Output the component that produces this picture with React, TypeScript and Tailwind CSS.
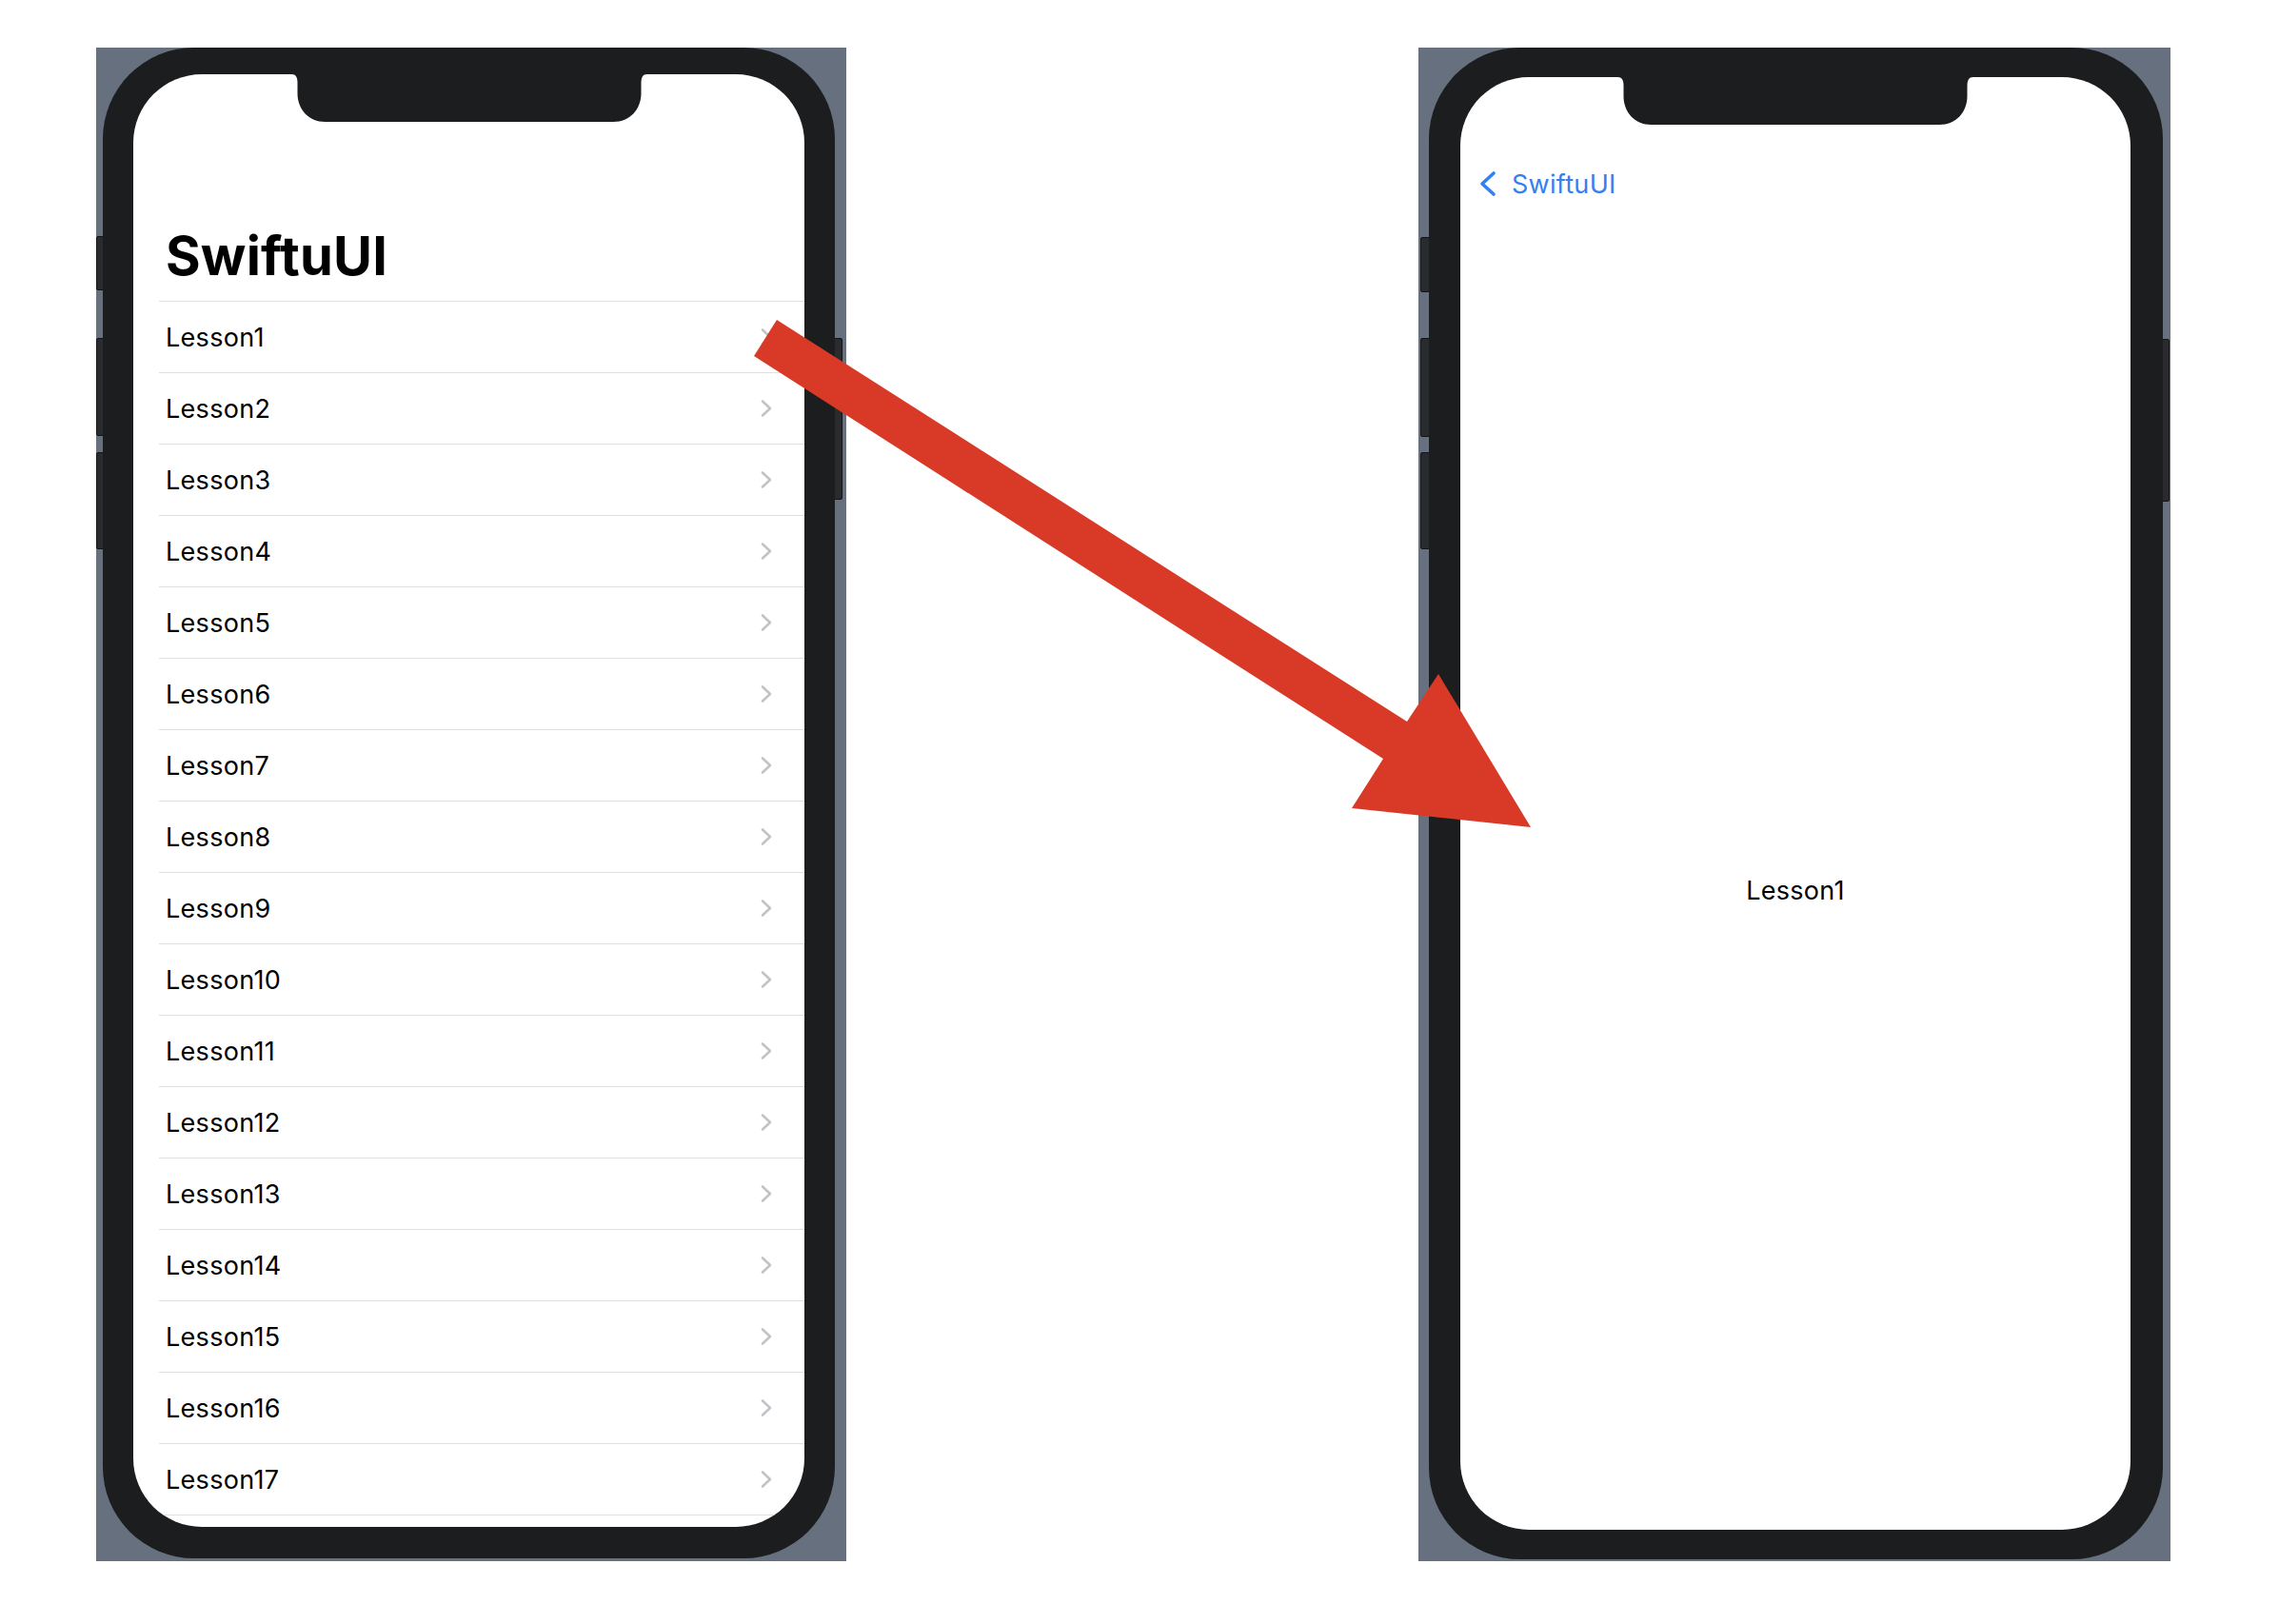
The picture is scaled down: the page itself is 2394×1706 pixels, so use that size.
import React from "react";

const LESSONS = Array.from({ length: 17 }, (_, i) => `Lesson${i + 1}`);

function Notch() {
  return (
    <svg
      className="absolute top-0 left-1/2 -translate-x-1/2"
      width="373"
      height="50"
      viewBox="0 0 373 50"
    >
      <path
        d="M0 0 H373 C369 0 367 3 367 9 V20 C367 37 355 50 338 50 H35 C18 50 6 37 6 20 V9 C6 3 4 0 0 0 Z"
        fill="#1c1d1f"
      />
    </svg>
  );
}

function RowChevron() {
  return (
    <svg width="14" height="20" viewBox="0 0 14 20" fill="none">
      <polyline
        points="3,2.5 11,10 3,17.5"
        stroke="#c3c3c7"
        strokeWidth="2.6"
        strokeLinecap="round"
        strokeLinejoin="round"
      />
    </svg>
  );
}

function BackChevron() {
  return (
    <svg width="20" height="28" viewBox="0 0 20 28" fill="none">
      <polyline
        points="17,3 5,14 17,25"
        stroke="#3380f2"
        strokeWidth="3.6"
        strokeLinecap="round"
        strokeLinejoin="round"
      />
    </svg>
  );
}

function Button({ className }: { className: string }) {
  return (
    <div
      className={`absolute bg-[#2a2b2e] border border-[#141416] rounded-[2px] ${className}`}
    />
  );
}

function ListScreen() {
  return (
    <div className="relative flex-1 bg-white rounded-[72px] overflow-hidden flex flex-col">
      <div className="pt-[163px] pb-[19px] pl-[34px] text-[56px] leading-[56px] font-bold text-black tracking-[0.2px]">
        SwiftuUI
      </div>
      <div className="ml-[27px] border-t border-[#dfdfe2]">
        {LESSONS.map((name) => (
          <div
            key={name}
            className="h-[75px] flex items-center justify-between pl-[7px] pr-[33px] border-b border-[#dfdfe2]"
          >
            <span className="text-[27px] leading-[27px] tracking-[0.3px] text-black">
              {name}
            </span>
            <RowChevron />
          </div>
        ))}
      </div>
      <Notch />
    </div>
  );
}

function DetailScreen() {
  return (
    <div className="relative flex-1 bg-white rounded-[72px] overflow-hidden flex flex-col">
      <div className="h-[182px] pt-[98px] pl-[18px]">
        <div className="flex items-center h-[28px]">
          <BackChevron />
          <span className="ml-[16px] text-[27px] leading-[27px] tracking-[0.3px] text-[#3380f2]">
            SwiftuUI
          </span>
        </div>
      </div>
      <div className="flex-1 flex items-center justify-center">
        <span className="text-[27px] leading-[27px] tracking-[0.3px] text-black">
          Lesson1
        </span>
      </div>
      <Notch />
    </div>
  );
}

function ListPhone() {
  return (
    <div className="relative w-[788px] h-[1590px] bg-[#67707e] flex pl-[7px] pr-[12px] pb-[3px]">
      <Button className="left-0 top-[198px] w-[10px] h-[57px]" />
      <Button className="left-0 top-[305px] w-[10px] h-[103px]" />
      <Button className="left-0 top-[425px] w-[10px] h-[102px]" />
      <Button className="left-[774px] top-[305px] w-[10px] h-[170px]" />
      <div className="relative flex-1 flex flex-col bg-[#1c1d1f] rounded-[96px] pt-[28px] pb-[33px] pl-[32px] pr-[32px]">
        <ListScreen />
      </div>
    </div>
  );
}

function DetailPhone() {
  return (
    <div className="relative w-[790px] h-[1590px] bg-[#67707e] flex pl-[11px] pr-[8px] pb-[2px]">
      <Button className="left-[2px] top-[199px] w-[11px] h-[58px]" />
      <Button className="left-[2px] top-[305px] w-[11px] h-[104px]" />
      <Button className="left-[2px] top-[425px] w-[11px] h-[102px]" />
      <Button className="left-[779px] top-[306px] w-[10px] h-[171px]" />
      <div className="relative flex-1 flex flex-col bg-[#1c1d1f] rounded-[96px] pt-[31px] pb-[31px] pl-[33px] pr-[34px]">
        <DetailScreen />
      </div>
    </div>
  );
}

function NavigationArrow() {
  return (
    <svg
      className="absolute inset-0 pointer-events-none"
      width="2394"
      height="1706"
      viewBox="0 0 2394 1706"
    >
      <polygon
        points="816,336 1478,758 1511,708 1608,869 1420,849 1453,797 792,374"
        fill="#d93a28"
      />
    </svg>
  );
}

export default function App() {
  return (
    <div className="relative w-[2394px] h-[1706px] bg-white overflow-hidden font-['Inter','Noto_Sans',sans-serif]">
      <div className="flex items-start pt-[50px] pl-[101px] gap-[601px]">
        <ListPhone />
        <DetailPhone />
      </div>
      <NavigationArrow />
    </div>
  );
}
